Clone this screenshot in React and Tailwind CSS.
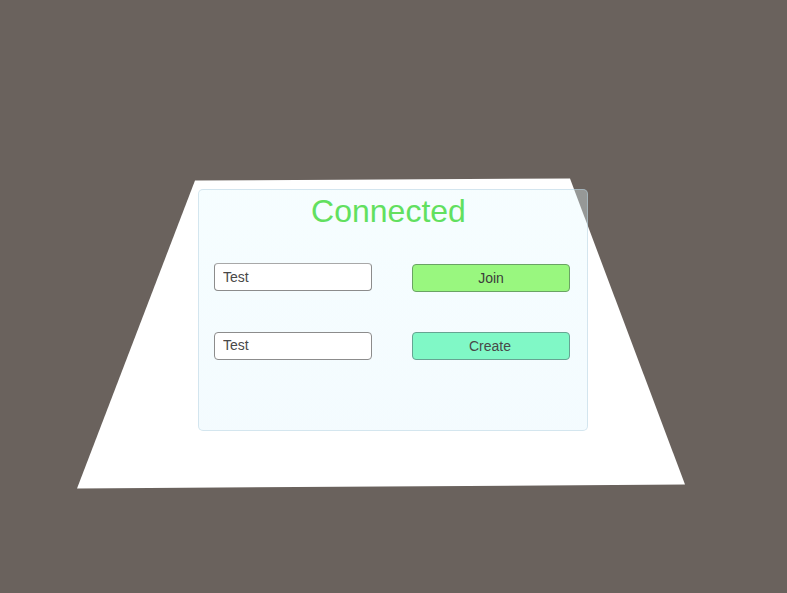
export default function App() {
    return (
        <div className="relative w-[787px] h-[593px] overflow-hidden bg-[#6a625d] pt-[189px] pl-[198px] font-['Liberation_Sans',Arial,sans-serif]">
            {/* white plane behind the panel */}
            <svg className="absolute left-0 top-0" width="787" height="593" viewBox="0 0 787 593">
                <polygon points="195,180.5 570,178.5 685,484.5 77,488.5" fill="#ffffff" />
            </svg>

            <div className="relative w-[390px] h-[242px] rounded-[5px] border border-[#b4cfe0]/50 bg-linear-to-b from-[#e6fbff]/36 to-[#e0f5fe]/36">
                <h1 className="mr-[9px] h-[42px] text-center text-[32px] leading-[42px] text-[#62e05f]">Connected</h1>

                <div className="mt-[31px] flex justify-between pl-[15px] pr-[17px]">
                    <input
                        readOnly
                        value="Test"
                        className="w-[158px] h-[28px] rounded-[4px] border border-[#8c8c8c] border-t-[#a8a8a8] bg-white px-2 pb-[1px] text-[14px] text-[#484848] outline-none"
                    />
                    <button className="mt-px w-[158px] h-[28px] rounded-[4px] border border-[#6aa364] bg-[#99f77f] text-[14px] text-[#3c3c3c]">Join</button>
                </div>

                <div className="mt-[40px] flex justify-between pl-[15px] pr-[17px]">
                    <input
                        readOnly
                        value="Test"
                        className="w-[158px] h-[28px] rounded-[4px] border border-[#8c8c8c] bg-white px-2 pb-[2px] text-[14px] text-[#484848] outline-none"
                    />
                    <button className="w-[158px] h-[28px] rounded-[4px] border border-[#66a492] bg-[#80f8c6] pr-[2px] text-[14px] text-[#484848]">Create</button>
                </div>
            </div>
        </div>
    );
}
